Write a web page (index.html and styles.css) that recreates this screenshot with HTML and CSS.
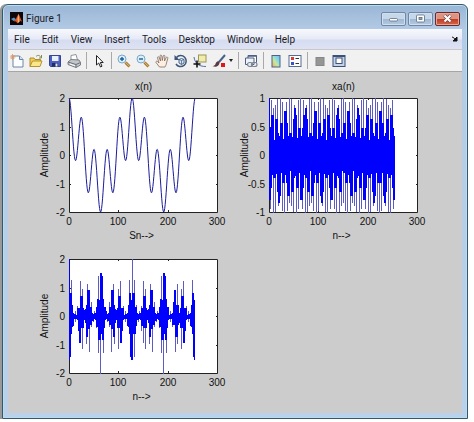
FILE: index.html
```html
<!DOCTYPE html>
<html lang="en">
<head>
    <meta charset="UTF-8">
    <meta name="viewport" content="width=device-width, initial-scale=1.0">
    <title>Figure 1</title>
    <link rel="stylesheet" href="styles.css">
</head>
<body>

    <div class="window">
        <!-- Title bar -->
        <header class="titlebar">
            <svg class="logo" viewBox="0 0 13 13">
                <rect width="13" height="13" fill="#0b0708"/>
                <path d="M1 7l3-1.500 2 1.800-2 2z" fill="#5f8fc0"/>
                <path d="M4 9.300l2-2.500 2.500-5 1 2 2.500 6-2-1.200-2.500 3-1.500-2z" fill="#d9552a"/>
                <path d="M8.500 1.800l-1 5 .5 4.500 1.500-2z" fill="#f6b26b"/>
            </svg>
            <h1 class="title">Figure 1</h1>
            <div class="controls">
                <button type="button" class="control" aria-label="Minimize">
                    <svg viewBox="0 0 11 9"><rect x="1.500" y="4.500" width="8" height="2.500" rx="1" fill="#fff" stroke="#5a6b80" stroke-width=".8"/></svg>
                </button>
                <button type="button" class="control" aria-label="Maximize">
                    <svg viewBox="0 0 11 9"><rect x="1.500" y="1" width="8" height="7" rx="1" fill="#fff" stroke="#5a6b80" stroke-width=".8"/><rect x="4" y="3.500" width="3" height="2" fill="#8fa5be" stroke="#5a6b80" stroke-width=".8"/></svg>
                </button>
                <button type="button" class="control close" aria-label="Close">
                    <svg viewBox="0 0 11 9"><path d="M2.500 1.500l6 6M8.500 1.500l-6 6" stroke="#6b3a3a" stroke-width="3.400"/><path d="M2.500 1.500l6 6M8.500 1.500l-6 6" stroke="#fff" stroke-width="2.200"/></svg>
                </button>
            </div>
        </header>

        <!-- Menu bar -->
        <nav class="menubar">
            <button type="button">File</button>
            <button type="button">Edit</button>
            <button type="button">View</button>
            <button type="button">Insert</button>
            <button type="button">Tools</button>
            <button type="button">Desktop</button>
            <button type="button">Window</button>
            <button type="button">Help</button>
            <button type="button" class="dock" aria-label="Dock figure">
                <svg viewBox="0 0 7 6"><path d="M1 1c1 .2 2 .8 3.500 2.500M6 1v4H2z" fill="#111" stroke="#111"/></svg>
            </button>
        </nav>

        <!-- Toolbar -->
        <div class="toolbar">
            <button type="button" aria-label="New figure">
                <svg viewBox="0 0 14 14"><path d="M3 2h6.500L13 5.500V13H3z" fill="#fbfdff" stroke="#6d87a8"/><path d="M9.500 2v3.500H13" fill="#cfdff0" stroke="#6d87a8"/><path d="M2.500 0v6M0 3h5.500M.8 1l3.500 4M4.300 1L.8 5" stroke="#d9996a" stroke-width=".9"/></svg>
            </button>
            <button type="button" aria-label="Open">
                <svg viewBox="0 0 14 14"><path d="M1 12.500V4h4l1 1.500h5.500V8" fill="#f0cf5a" stroke="#b08c2a"/><path d="M1 12.500L3.500 7H13l-2 5.500z" fill="#fbe78a" stroke="#b5932f"/><path d="M7 2.500c2-2 4-1 5 1M12.500 1v3H10" fill="none" stroke="#7a8c5a"/></svg>
            </button>
            <button type="button" aria-label="Save">
                <svg viewBox="0 0 14 14"><path d="M1.500 1.500h11v11h-10l-1-1z" fill="#4c5fc0" stroke="#35458f"/><rect x="4" y="2" width="6.500" height="5" fill="#e9eefc"/><rect x="4" y="9" width="6" height="3.500" fill="#1f2c66"/><rect x="7.500" y="9.500" width="2" height="3" fill="#dfe4f5"/></svg>
            </button>
            <button type="button" aria-label="Print">
                <svg viewBox="0 0 14 14"><path d="M4 7V1.500l5-1L10.500 6" fill="#fff" stroke="#8d949c"/><path d="M1 8l3-2.500 8 .5 1.500 2.500v2.500L9 13.500l-8-3z" fill="#c3c7cc" stroke="#777d85"/><path d="M1 8l8 2.500 4.500-2M9 10.500v3" fill="none" stroke="#6b7078"/><path d="M3 10l5 1.800" stroke="#fff"/></svg>
            </button>
            <span class="separator"></span>
            <button type="button" aria-label="Edit plot">
                <svg viewBox="0 0 14 14"><path d="M4.500 1.500v9.500l2.200-2 1.800 4 1.500-.8-1.700-3.700h2.900z" fill="#fff" stroke="#222"/></svg>
            </button>
            <span class="separator"></span>
            <button type="button" aria-label="Zoom in">
                <svg viewBox="0 0 14 14"><path d="M8.500 8.500l4 4" stroke="#a87a35" stroke-width="3"/><path d="M8.500 8.300l3.800 3.800" stroke="#e6bd6e"/><circle cx="5" cy="5" r="4" fill="#d9effb" stroke="#7ba7cd"/><path d="M5 3v4M3 5h4" stroke="#1d5f90" stroke-width="1.400"/></svg>
            </button>
            <button type="button" aria-label="Zoom out">
                <svg viewBox="0 0 14 14"><path d="M8.500 8.500l4 4" stroke="#a87a35" stroke-width="3"/><path d="M8.500 8.300l3.800 3.800" stroke="#e6bd6e"/><circle cx="5" cy="5" r="4" fill="#d9effb" stroke="#7ba7cd"/><path d="M3 5h4" stroke="#1d5f90" stroke-width="1.400"/></svg>
            </button>
            <button type="button" aria-label="Pan">
                <svg viewBox="0 0 14 14"><path d="M4.500 13L1 8.500c-.5-1 .8-1.800 1.800-.8L4 9 2.500 3.800c-.2-1.200 1.300-1.500 1.700-.4L5.500 7 5 2c0-1.200 1.700-1.200 1.800 0l.5 4.500L8.200 2c.3-1.100 1.800-.8 1.700.3L9.500 7l1.700-3.500c.6-1 1.900-.4 1.600.7L11.500 9c-.3 2-1 3-1.500 4z" fill="#fdeee0" stroke="#7d6a62" stroke-width=".8"/></svg>
            </button>
            <button type="button" aria-label="Rotate 3D">
                <svg viewBox="0 0 14 14"><path d="M2.500 3.500A5.500 5.500 0 1 1 2 10" fill="none" stroke="#3d5578" stroke-width="1.500"/><path d="M.5 1v5h5z" fill="#3d5578"/><path d="M5 5.500l2.500-1L10 5.500V9l-2.500 1.500L5 9z" fill="#dce7f4" stroke="#4a678e"/><path d="M5 5.500l2.500 1L10 5.500M7.500 6.500v4" fill="none" stroke="#4a678e" stroke-width=".8"/></svg>
            </button>
            <button type="button" aria-label="Data cursor">
                <svg viewBox="0 0 14 14"><path d="M1 3c1 6 4 9.500 12 9.500" fill="none" stroke="#5370a5"/><rect x="5.500" y="1" width="7.500" height="7" fill="#f0ecae" stroke="#9a9658"/><path d="M4 6.500v7M.5 10h7" stroke="#111" stroke-width="1.600"/></svg>
            </button>
            <button type="button" aria-label="Brush">
                <svg viewBox="0 0 14 14"><path d="M13 1L7 8" stroke="#48618a" stroke-width="2"/><path d="M7.500 7.500C5 6.500 4 8.500 3.500 10c-.5 1.500-2 2-3 2 3 1.500 6.500.5 7-3z" fill="#5a3a42"/><rect x="9" y="9" width="4" height="4" fill="#e01818"/></svg>
            </button>
            <button type="button" class="caret" aria-label="Brush options">
                <svg viewBox="0 0 4 3"><path d="M0 0h4L2 3z" fill="#222"/></svg>
            </button>
            <span class="separator"></span>
            <button type="button" aria-label="Link plot">
                <svg viewBox="0 0 14 14"><path d="M4 1.500h8.500v7H4z" fill="#fff" stroke="#4a5f85"/><path d="M4 2h8.500" stroke="#4a5f85" stroke-width="1.500"/><path d="M1.500 4h8.500v6.500H1.500z" fill="#eef3fa" stroke="#4a5f85"/><rect x="3.500" y="8.500" width="5" height="4" rx="2" fill="#e4e8ed" stroke="#7b8694" stroke-width="1.200"/><rect x="7.500" y="8.500" width="5.500" height="4" rx="2" fill="none" stroke="#7b8694" stroke-width="1.200"/></svg>
            </button>
            <span class="separator"></span>
            <button type="button" aria-label="Insert colorbar">
                <svg viewBox="0 0 14 14"><defs><linearGradient id="jet" x1="1" y1="0" x2="0" y2="1"><stop offset="0" stop-color="#8faaf0"/><stop offset=".35" stop-color="#83dbe6"/><stop offset=".6" stop-color="#c9e896"/><stop offset="1" stop-color="#f3a65e"/></linearGradient></defs><rect x="3" y="1.500" width="8" height="11.500" fill="url(#jet)" stroke="#4a628c"/></svg>
            </button>
            <button type="button" aria-label="Insert legend">
                <svg viewBox="0 0 14 14"><rect x="1" y="1.500" width="12" height="11" fill="#fff" stroke="#566d92"/><rect x="3" y="3" width="3" height="3" fill="#d93a3a"/><rect x="3" y="8" width="3" height="3" fill="#3a52c9"/><path d="M7.500 4.500H11M7.500 9.500H11" stroke="#333" stroke-width="1.200"/></svg>
            </button>
            <span class="separator"></span>
            <button type="button" aria-label="Hide plot tools">
                <svg viewBox="0 0 14 14"><rect x="3" y="3.500" width="8" height="8" fill="#969696" stroke="#868686"/></svg>
            </button>
            <button type="button" aria-label="Show plot tools">
                <svg viewBox="0 0 14 14"><rect x="1" y="1.500" width="12" height="11" fill="#c5d3e8" stroke="#3d5178"/><path d="M1 2h12" stroke="#3d5178" stroke-width="2"/><rect x="4" y="4" width="6" height="5.500" fill="#fff" stroke="#3d5178"/></svg>
            </button>
        </div>

        <!-- Plots -->
        <main class="figure" id="figure"></main>
    </div>

    <script src="plots.js"></script>

</body>
</html>
```

FILE: styles.css
```css
* {
    box-sizing: border-box;
}
body {
    margin: 0;
    padding: 4px 6px 3px 2px;
    background-color: #fff;
    font-family: Roboto, "Open Sans", sans-serif;
    font-size: 10px;
    color: #1c1c28;
}
button {
    padding: 0;
    border: none;
    background: none;
    font: inherit;
    color: inherit;
}
svg {
    display: block;
}
.window {
    padding: 0 5px 5px;
    border: 1px solid #3b5566;
    border-radius: 6px 6px 0 0;
    background: linear-gradient(#9ab6d6, #b4cbe5 26px, #b9d1ea);
    box-shadow: -2px 0 0 #999, inset 0 0 0 1px #b5def0;
}
.titlebar {
    display: flex;
    align-items: center;
    height: 24px;
    padding: 3px 2px 0;
}
.logo {
    width: 13px;
    height: 13px;
}
.title {
    flex: 1;
    margin: 0 0 0 3px;
    font-size: 10px;
    font-weight: normal;
}
.controls {
    display: flex;
    gap: 2px;
}
.control {
    display: flex;
    align-items: center;
    justify-content: center;
    width: 25px;
    height: 14px;
    border: 1px solid #6f88a5;
    border-radius: 2px;
    background: linear-gradient(#c6d7ea 50%, #9fb7d2 50%, #b4cae2);
    box-shadow: inset 0 0 0 1px #d0dff0;
}
.control svg {
    width: 11px;
    height: 9px;
}
.control.close {
    border-color: #6b2a2a;
    background: linear-gradient(#dd9384 50%, #c03a22 50%, #d3694a);
    box-shadow: inset 0 0 0 1px #e3a699;
}
.menubar {
    display: flex;
    align-items: center;
    gap: 12px;
    height: 20px;
    padding: 0 4px 0 6px;
    background: linear-gradient(#f7f9fd, #e6eaf6 50%, #d6dcf0 55%, #dde3f4);
}
.dock {
    margin-left: auto;
}
.dock svg {
    width: 7px;
    height: 6px;
}
.toolbar {
    display: flex;
    align-items: center;
    gap: 5px;
    height: 23px;
    padding: 0 2px;
    border-top: 1px solid #c8c8cc;
    border-bottom: 1px solid #a5a5a5;
    background-color: #f1f1f1;
}
.toolbar svg {
    width: 14px;
    height: 14px;
}
.toolbar .caret {
    margin-left: -2px;
}
.toolbar .caret svg {
    width: 4px;
    height: 3px;
}
.separator {
    width: 1px;
    height: 17px;
    background-color: #a9a9a9;
}
.figure {
    display: grid;
    grid-template-columns: 200px 200px;
    padding: 6px 0 13px 21px;
    background-color: #ccc;
}
.axes {
    width: 200px;
    height: 161px;
    overflow: visible;
    font-family: "Liberation Sans", Arial, sans-serif;
    font-size: 10px;
    fill: #111;
}
.axes .box {
    fill: #fff;
    stroke: none;
}
.axes .frame {
    fill: none;
    stroke: #222;
}
.axes .line {
    fill: none;
    stroke: #1c1c9c;
}
.axes .dense {
    fill: none;
    stroke: #00f;
    shape-rendering: crispEdges;
}
.axes .spike {
    fill: none;
    stroke: #5c5cc4;
    shape-rendering: crispEdges;
}
```

FILE: plots.js
```js
// Plot box inside each svg
const LEFT = 40, TOP = 20, WIDTH = 149, HEIGHT = 114;
const N = 256;

const x = n => Math.cos(2 * Math.PI * n / 128) + Math.cos(2 * Math.PI * 5 * n / 128);
const xa = n => Math.cos(2 * Math.PI * 50 * n / 128);

const plots = [
    { title: 'x(n)', xlabel: 'Sn-->', max: 2, ticks: [2, 1, 0, -1, -2], fn: x },
    { title: 'xa(n)', xlabel: 'n-->', max: 1, ticks: [1, 0.5, 0, -0.5, -1], fn: xa, fast: true },
    { title: '', xlabel: 'n-->', max: 2, ticks: [2, 1, 0, -1, -2], fn: n => x(n) * xa(n), fast: true }
];

// Smooth signal, one polyline
function drawLine(p, px, py) {
    let points = '';
    for (let n = 0; n < N; n++) {
        points += px(n).toFixed(2) + ',' + py(p.fn(n)).toFixed(2) + ' ';
    }
    return `<polyline class="line" points="${points}"/>`;
}

// Fast signal: one vertical run per pixel column, bright where a neighbour is covered too
function drawColumns(p, px, py) {
    const cols = {};
    const add = (col, a, b) => {
        const run = cols[col] = cols[col] || [Infinity, -Infinity];
        run[0] = Math.min(run[0], a, b);
        run[1] = Math.max(run[1], a, b);
    };
    for (let n = 0; n < N - 1; n++) {
        const c1 = Math.floor(px(n)), c2 = Math.floor(px(n + 1));
        const a = Math.round(py(p.fn(n))), b = Math.round(py(p.fn(n + 1)));
        const mid = Math.round((a + b) / 2);
        // a step into the next column is shared half and half
        add(c1, a, c1 === c2 ? b : mid);
        add(c2, c1 === c2 ? a : mid, b);
    }
    let spikes = '', dense = '';
    for (const key in cols) {
        const col = +key;
        const run = cols[col];
        spikes += `M${col + 0.5} ${run[0]}V${run[1] + 1}`;
        const prev = cols[col - 1] || run, next = cols[col + 1] || run;
        const from = Math.max(run[0], Math.min(prev[0], next[0]));
        const to = Math.min(run[1], Math.max(prev[1], next[1]));
        if (to > from) dense += `M${col + 0.5} ${from}V${to + 1}`;
    }
    return `<path class="spike" d="${spikes}"/><path class="dense" d="${dense}"/>`;
}

function drawAxes(p) {
    const px = n => LEFT + n * (WIDTH - 1) / 300;
    const py = v => TOP + (p.max - v) / (2 * p.max) * HEIGHT;
    const midX = LEFT + WIDTH / 2, midY = TOP + HEIGHT / 2;
    const right = LEFT + WIDTH, bottom = TOP + HEIGHT;

    let out = `<rect class="box" x="${LEFT}" y="${TOP}" width="${WIDTH}" height="${HEIGHT}"/>`;

    let frame = `M${LEFT + 0.5} ${TOP + 0.5}H${right - 0.5}V${bottom + 0.5}H${LEFT + 0.5}Z`;
    for (const t of [100, 200]) {
        const c = Math.round(px(t)) + 0.5;
        frame += `M${c} ${TOP}v2M${c} ${bottom}v-2`;
    }
    for (const t of p.ticks.slice(1, -1)) {
        const c = Math.round(py(t)) + 0.5;
        frame += `M${LEFT} ${c}h2M${right} ${c}h-2`;
    }
    out += `<path class="frame" d="${frame}"/>`;
    out += p.fast ? drawColumns(p, px, py) : drawLine(p, px, py);

    for (const t of p.ticks) {
        out += `<text x="${LEFT - 4}" y="${Math.round(py(t)) + 4}" text-anchor="end">${t}</text>`;
    }
    for (const t of [0, 100, 200, 300]) {
        out += `<text x="${Math.round(px(t))}" y="${bottom + 13}" text-anchor="middle">${t}</text>`;
    }
    if (p.title) {
        out += `<text x="${midX}" y="${TOP - 8}" text-anchor="middle">${p.title}</text>`;
    }
    out += `<text x="${midX - 2}" y="${bottom + 27}" text-anchor="middle">${p.xlabel.replace('>', '&gt;')}</text>`;
    out += `<text transform="translate(19 ${midY}) rotate(-90)" text-anchor="middle">Amplitude</text>`;

    return `<svg class="axes" viewBox="0 0 200 161">${out}</svg>`;
}

document.getElementById('figure').innerHTML = plots.map(drawAxes).join('');
```
